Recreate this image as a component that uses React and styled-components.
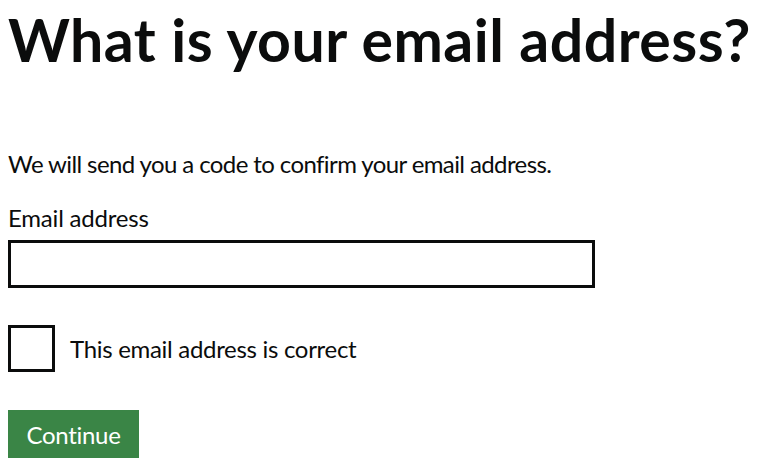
import React from 'react'
import styled, { createGlobalStyle } from 'styled-components'

const GlobalStyle = createGlobalStyle`
  html, body {
    margin: 0;
    padding: 0;
    background: #fff;
  }
  body {
    font-family: Lato, 'Liberation Sans', sans-serif;
    color: #0b0c0c;
  }
`

const Page = styled.main`
  padding: 0 8px;
  display: flex;
  flex-direction: column;
  align-items: flex-start;
`

const Heading = styled.h1`
  margin: 6px 0 0;
  font-size: 59px;
  line-height: 68px;
  font-weight: 700;
  letter-spacing: 0.5px;
  white-space: nowrap;
`

const Body = styled.p`
  margin: 76px 0 0;
  font-size: 24px;
  line-height: 28px;
  letter-spacing: -0.6px;
`

const Field = styled.div`
  margin-top: 26px;
  display: flex;
  flex-direction: column;
  gap: 8px;
`

const Label = styled.label`
  font-size: 24px;
  line-height: 28px;
  letter-spacing: -0.2px;
`

const TextInput = styled.input`
  box-sizing: border-box;
  width: 587px;
  height: 48px;
  border: 3px solid #0b0c0c;
  border-radius: 0;
  padding: 5px;
  font: inherit;
  background: #fff;
`

const CheckRow = styled.label`
  margin-top: 37px;
  display: flex;
  align-items: center;
  gap: 15px;
  font-size: 24px;
  letter-spacing: -0.3px;
  cursor: pointer;
`

const Box = styled.span`
  box-sizing: border-box;
  width: 47px;
  height: 47px;
  border: 3px solid #0b0c0c;
  background: #fff;
`

const Button = styled.button`
  margin-top: 38px;
  box-sizing: border-box;
  width: 131px;
  height: 48px;
  border: 0;
  border-radius: 0;
  background: #3a8546;
  box-shadow: 0 3px 0 #1a2a1e;
  color: #fff;
  font-family: inherit;
  font-size: 24px;
  letter-spacing: -0.3px;
  padding: 0;
  cursor: pointer;
`

export default function App() {
  return (
    <>
      <GlobalStyle />
      <Page>
        <Heading>What is your email address?</Heading>
        <Body>We will send you a code to confirm your email address.</Body>
        <Field>
          <Label htmlFor="email">Email address</Label>
          <TextInput id="email" type="email" />
        </Field>
        <CheckRow>
          <Box />
          This email address is correct
        </CheckRow>
        <Button type="button">Continue</Button>
      </Page>
    </>
  )
}
